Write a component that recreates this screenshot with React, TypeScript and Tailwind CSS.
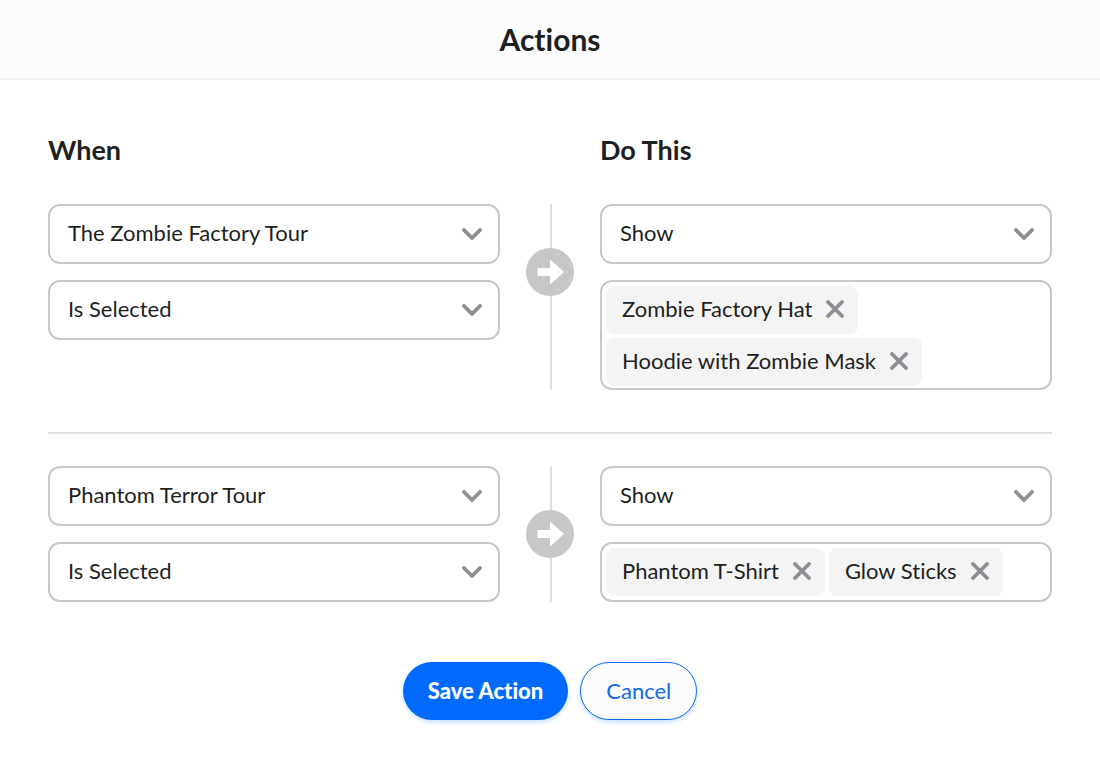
import { useState } from "react";

type Rule = {
  id: string;
  trigger: string;
  condition: string;
  effect: string;
  targets: string[];
};

const TRIGGERS = ["The Zombie Factory Tour", "Phantom Terror Tour"];
const CONDITIONS = ["Is Selected", "Is Not Selected"];
const EFFECTS = ["Show", "Hide"];

const INITIAL_RULES: Rule[] = [
  {
    id: "zombie",
    trigger: "The Zombie Factory Tour",
    condition: "Is Selected",
    effect: "Show",
    targets: ["Zombie Factory Hat", "Hoodie with Zombie Mask"],
  },
  {
    id: "phantom",
    trigger: "Phantom Terror Tour",
    condition: "Is Selected",
    effect: "Show",
    targets: ["Phantom T-Shirt", "Glow Sticks"],
  },
];

function SelectField({ label, value, options, onChange }: {
  label: string;
  value: string;
  options: string[];
  onChange: (value: string) => void;
}) {
  return (
    <div className="grid items-center">
      <select
        aria-label={label}
        value={value}
        onChange={(e) => onChange(e.target.value)}
        className="col-start-1 row-start-1 h-15 w-full cursor-pointer appearance-none rounded-xl border-2 border-[#c6c8ca] bg-white pr-12 pb-1 pl-[18px] text-[22px] text-[#1e1f21]"
      >
        {options.map((o) => (
          <option key={o}>{o}</option>
        ))}
      </select>
      <svg
        viewBox="0 0 20 12"
        className="pointer-events-none col-start-1 row-start-1 mr-[18px] h-3 w-5 justify-self-end"
        fill="none"
        stroke="#8b8d90"
        strokeWidth="3.8"
        strokeLinecap="round"
        strokeLinejoin="round"
        aria-hidden="true"
      >
        <path d="M2 2l8 8 8-8" />
      </svg>
    </div>
  );
}

function Chip({ text, onRemove }: { text: string; onRemove: () => void }) {
  return (
    <li className="flex h-12 items-center gap-3.5 rounded-lg bg-[#f4f4f5] pr-3.5 pb-0.5 pl-4 text-[22px] text-[#1e1f21]">
      <span className="pb-0.5">{text}</span>
      <button type="button" aria-label={`Remove ${text}`} onClick={onRemove} className="cursor-pointer">
        <svg viewBox="0 0 18 18" className="size-[18px]" fill="none" stroke="#8b8e93" strokeWidth="3.8" strokeLinecap="round" aria-hidden="true">
          <path d="M2 2l14 14M16 2L2 16" />
        </svg>
      </button>
    </li>
  );
}

function Connector() {
  return (
    <div className="grid" aria-hidden="true">
      <div className="col-start-1 row-start-1 ml-[50%] w-0.5 bg-[#dedfe0]" />
      <svg viewBox="0 0 48 48" className="col-start-1 row-start-1 mt-11 size-12 justify-self-center">
        <circle cx="24" cy="24" r="24" fill="#c5c7c9" />
        <path d="M11.5 20H24v-8.5L38 24 24 36.5V28H11.5z" fill="#fff" />
      </svg>
    </div>
  );
}

export default function App() {
  const [rules, setRules] = useState(INITIAL_RULES);
  const update = (id: string, patch: Partial<Rule>) =>
    setRules((all) => all.map((r) => (r.id === id ? { ...r, ...patch } : r)));

  return (
    <div className="min-h-screen bg-white font-['Lato','Liberation_Sans',sans-serif] text-[#1e1f21] [font-variant-ligatures:none]">
      <header className="flex h-20 items-center justify-center border-b-2 border-[#f1f1f2] bg-[#fcfcfc]">
        <h1 className="text-[30px] leading-8 font-bold">Actions</h1>
      </header>
      <form className="px-12 pt-[54px]" onSubmit={(e) => e.preventDefault()}>
        <div className="mb-[38px] grid grid-cols-[1fr_100px_1fr] text-[27px] leading-8 font-bold">
          <h2>When</h2>
          <h2 className="col-start-3">Do This</h2>
        </div>
        <div className="divide-y-2 divide-[#dedfe0]">
          {rules.map((rule) => (
            <section key={rule.id} className="grid grid-cols-[1fr_100px_1fr] pb-[42px] not-first:pt-8 last:pb-0">
              <div className="flex flex-col gap-4">
                <SelectField label="Item" value={rule.trigger} options={TRIGGERS} onChange={(trigger) => update(rule.id, { trigger })} />
                <SelectField label="Condition" value={rule.condition} options={CONDITIONS} onChange={(condition) => update(rule.id, { condition })} />
              </div>
              <Connector />
              <div className="flex flex-col gap-4">
                <SelectField label="Effect" value={rule.effect} options={EFFECTS} onChange={(effect) => update(rule.id, { effect })} />
                <ul className="flex min-h-15 flex-wrap content-start gap-1 rounded-xl border-2 border-[#c6c8ca] p-1 pb-0.5">
                  {rule.targets.map((t) => (
                    <Chip key={t} text={t} onRemove={() => update(rule.id, { targets: rule.targets.filter((x) => x !== t) })} />
                  ))}
                </ul>
              </div>
            </section>
          ))}
        </div>
        <div className="mt-15 flex justify-center gap-3 pb-12 text-[22px]">
          <button type="submit" className="h-[58px] cursor-pointer rounded-full bg-[#006aff] px-[25px] pb-0.5 font-black text-white shadow-[0_2px_4px_rgba(0,106,255,0.25)]">
            Save Action
          </button>
          <button type="button" className="h-[58px] cursor-pointer rounded-full border border-[#0f6ae6] bg-[#fcfcfd] px-[25px] pb-0.5 text-[#0f6ae6] shadow-[0_2px_4px_rgba(0,106,255,0.25)]">
            Cancel
          </button>
        </div>
      </form>
    </div>
  );
}
